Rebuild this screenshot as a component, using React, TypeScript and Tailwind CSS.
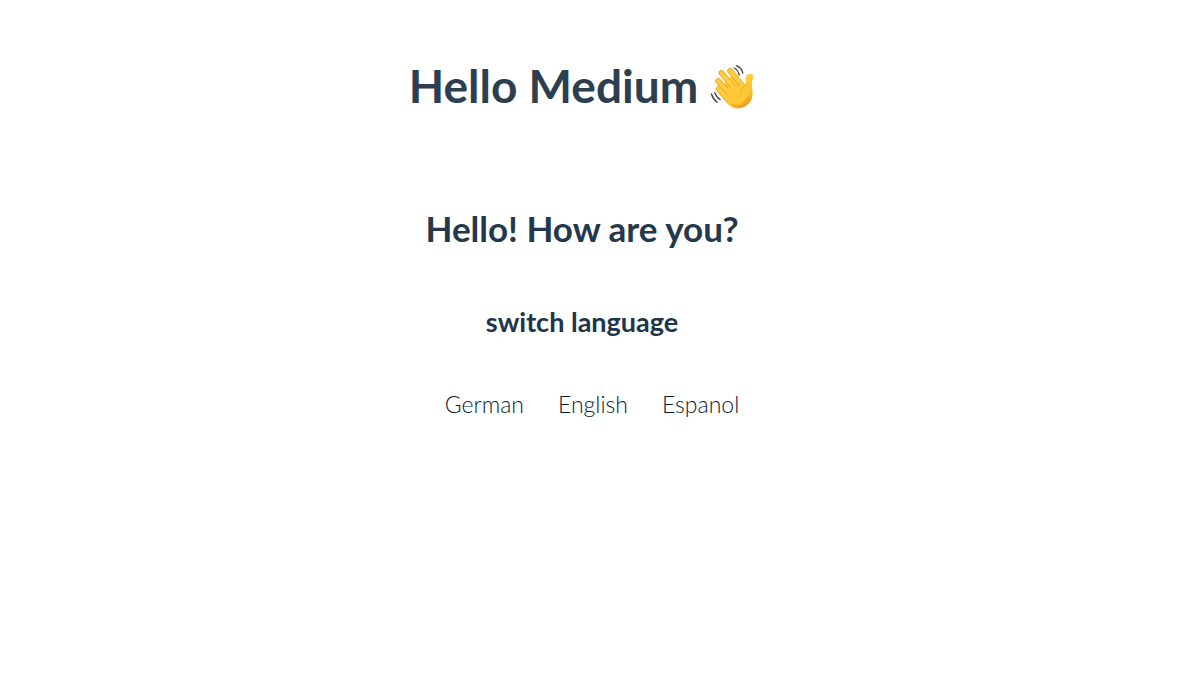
import { useState } from "react";

type Language = {
    code: string;
    label: string;
    greeting: string;
}

const languages: Language[] = [
    { code: "de", label: "German", greeting: "Hallo! Wie geht's?" },
    { code: "en", label: "English", greeting: "Hello! How are you?" },
    { code: "es", label: "Espanol", greeting: "¡Hola! ¿Cómo estás?" },
];

function WavingHand({ className }: { className?: string }) {
    return (
        <svg viewBox="34 26 134 135" className={className} role="img" aria-label="Waving hand">
            <defs>
                <linearGradient id="skin" x1="0.2" y1="0" x2="0.75" y2="1">
                    <stop offset="0" stopColor="#ffd24c" />
                    <stop offset="0.65" stopColor="#fdc334" />
                    <stop offset="1" stopColor="#e89a16" />
                </linearGradient>
            </defs>
            {/* Palm and thumb */}
            <path
                d="M76 88 L96 62 L128 88 C136 91 141 86 141 79 C138 66 143 56 154 56 C163 56 166 62 163 68 C158 79 158 90 161 105 C165 134 148 157 121 159 C105 160 94 152 83 142 L62 116 Z"
                fill="url(#skin)"
            />
            {/* Fingers */}
            <g stroke="#e39c17" strokeWidth="17" strokeLinecap="round">
                <path d="M60 101 L88 133" />
                <path d="M58 77 L92 115" />
                <path d="M68 53 L108 101" />
                <path d="M94 46 L129 89" />
            </g>
            <g stroke="#ffcb40" strokeWidth="13" strokeLinecap="round">
                <path d="M60 101 L93 139" />
                <path d="M58 77 L98 122" />
                <path d="M68 53 L114 108" />
                <path d="M94 46 L132 92" />
            </g>
            <path d="M88 98 L124 92 L143 88 L151 118 L126 148 L99 145 L84 128 Z" fill="#ffc838" />
            <path d="M141 86 C132 94 124 104 127 116" fill="none" stroke="#e7a51f" strokeWidth="2.5" strokeLinecap="round" />
            {/* Motion lines */}
            <g fill="none" stroke="#454545" strokeWidth="4" strokeLinecap="round">
                <path d="M106 38 Q118 44 121 59" />
                <path d="M113 31 Q128 37 132 53" />
                <path d="M38 116 Q42 131 55 141" />
                <path d="M48 112 Q52 126 64 133" />
            </g>
        </svg>
    )
}

export default function App() {
    const [active, setActive] = useState(languages[1]);

    return (
        <main className="min-h-screen bg-white pt-14 pr-9 text-center font-['Lato',sans-serif] text-[#2c3e50]">
            <h1 className="flex items-center justify-center gap-3 text-[46px] leading-15 font-bold">
                Hello Medium
                <WavingHand className="size-[45px]" />
            </h1>
            <h2 className="mt-22 text-[35px] leading-12 font-bold text-[#24384c]">{active.greeting}</h2>
            <h3 className="mt-13 text-[27px] leading-9 font-bold text-[#20354a]">switch language</h3>
            <nav className="mt-12 flex justify-center gap-[34px] pl-5">
                {languages.map((language) => (
                    <button
                        key={language.code}
                        type="button"
                        onClick={() => setActive(language)}
                        className="cursor-pointer text-[23px] leading-8 font-light text-[#0b1c30]"
                    >
                        {language.label}
                    </button>
                ))}
            </nav>
        </main>
    )
}
